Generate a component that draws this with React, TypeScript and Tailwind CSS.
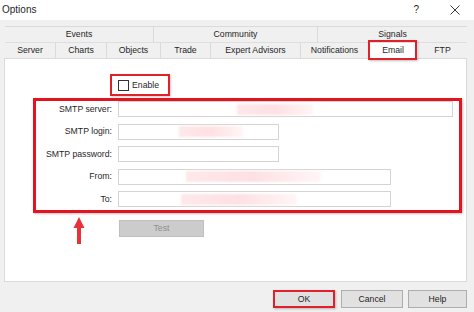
import React from 'react';

const row1 = [
  { label: 'Events', w: 'w-[148px]' },
  { label: 'Community', w: 'w-[164px]' },
  { label: 'Signals', w: 'w-[150px]' },
];

const row2 = [
  { label: 'Server', w: 'w-[50px]' },
  { label: 'Charts', w: 'w-[51px]' },
  { label: 'Objects', w: 'w-[54px]' },
  { label: 'Trade', w: 'w-[50px]' },
  { label: 'Expert Advisors', w: 'w-[90px]' },
  { label: 'Notifications', w: 'w-[68px]' },
  { label: 'Email', w: 'w-[49px]', active: true },
  { label: 'FTP', w: 'w-[50px]' },
];

// blurred-out values: offset inside the field and width
const fields = [
  { label: 'SMTP server:', w: 'w-[335px]', blur: { ml: 'ml-[118px]', w: 'w-[76px]' } },
  { label: 'SMTP login:', w: 'w-[161px]', blur: { ml: 'ml-[60px]', w: 'w-[64px]' } },
  { label: 'SMTP password:', w: 'w-[161px]', blur: null },
  { label: 'From:', w: 'w-[273px]', blur: { ml: 'ml-[67px]', w: 'w-[135px]' } },
  { label: 'To:', w: 'w-[273px]', blur: { ml: 'ml-[62px]', w: 'w-[116px]' } },
];

export default function App() {
  return (
    <div className="relative w-[474px] h-[312px] overflow-hidden bg-[#f0f0f0] text-[#1f1f1f] font-['Liberation_Sans',Arial,sans-serif]">
      {/* title bar */}
      <div className="h-[20px] bg-white flex items-center pl-[2px]">
        <span className="text-[10px] leading-none">Options</span>
        <span className="ml-auto text-[10px] leading-none">?</span>
        <svg width="10" height="10" viewBox="0 0 10 10" className="ml-[31px] mr-[14px]">
          <path d="M0.5 0.5 L9.5 9.5 M9.5 0.5 L0.5 9.5" stroke="#222" strokeWidth="0.9" />
        </svg>
      </div>

      <div className="pl-[4px] pt-[6px]">
        {/* tab strip */}
        <div className="ml-[1px] w-[462px] border-t border-[#dadada] text-[8.7px] leading-none">
          <div className="flex h-[16px] border-b border-[#dedede]">
            {row1.map((t, i) => (
              <div
                key={t.label}
                className={`${t.w} flex items-center justify-center ${i > 0 ? 'border-l border-[#dadada]' : ''}`}
              >
                {t.label}
              </div>
            ))}
          </div>
          <div className="flex h-[15px]">
            {row2.map((t, i) => (
              <div
                key={t.label}
                className={`${t.w} relative flex items-center justify-center ${i > 0 ? 'border-l border-[#dadada]' : ''} ${t.active ? 'bg-white' : ''}`}
              >
                {t.label}
                {t.active && (
                  <div className="absolute left-[-1px] right-[0px] top-[-3px] bottom-[-2px] border-[2px] border-[#e0212a] shadow-[1px_1px_2px_rgba(0,0,0,0.25)]" />
                )}
              </div>
            ))}
          </div>
        </div>

        {/* content panel */}
        <div className="w-[463px] h-[224px] bg-white border border-[#dadada] text-[8.7px] leading-none">
          <div className="ml-[105px] mt-[15px] w-[60px] h-[22px] border-[2px] border-[#e0212a] flex items-center pl-[6px] shadow-[1px_1px_2px_rgba(0,0,0,0.2)]">
            <div className="w-[11px] h-[11px] border border-[#333] bg-white" />
            <span className="ml-[3px]">Enable</span>
          </div>

          <div className="ml-[28px] mt-[2px] w-[429px] h-[115px] border-[3px] border-[#e3141d] shadow-[1px_1px_2px_rgba(0,0,0,0.25)]">
            <div className="grid grid-cols-[76px_1fr] gap-x-[6px] gap-y-[6.5px] auto-rows-[16px]">
              {fields.map((f) => (
                <React.Fragment key={f.label}>
                  <div className="flex items-center justify-end">{f.label}</div>
                  <div className={`${f.w} h-[16px] border border-[#d4d4d4] bg-white flex items-center`}>
                    {f.blur && (
                      <div
                        className={`${f.blur.ml} ${f.blur.w} h-[11px] blur-[1px] bg-gradient-to-r from-[#fde8ea] via-[#fde0e3] to-[#fff6f6]`}
                      />
                    )}
                  </div>
                </React.Fragment>
              ))}
            </div>
          </div>

          <div className="ml-[114px] mt-[7px] w-[85px] h-[17px] bg-[#cccccc] border border-[#bfbfbf] flex items-center justify-center text-[#8f8f8f]">
            Test
          </div>
        </div>

        {/* dialog buttons */}
        <div className="flex mt-[8px] text-[8.7px] leading-none">
          <div className="ml-[269px] w-[62px] h-[18px] border-[2px] border-[#e0212a] bg-[#e1e1e1] flex items-center justify-center shadow-[1px_1px_2px_rgba(0,0,0,0.25)]">
            OK
          </div>
          <div className="ml-[6px] w-[62px] h-[18px] border border-[#adadad] bg-[#e1e1e1] flex items-center justify-center">
            Cancel
          </div>
          <div className="ml-[5px] w-[59px] h-[18px] border border-[#adadad] bg-[#e1e1e1] flex items-center justify-center">
            Help
          </div>
        </div>
      </div>

      {/* annotation arrow */}
      <svg width="14" height="30" viewBox="0 0 14 30" className="absolute left-[72px] top-[216px]">
        <path d="M7 1 L12.5 12 L9 12 L9 28 L5 28 L5 12 L1.5 12 Z" fill="#e8323a" />
      </svg>
    </div>
  );
}
